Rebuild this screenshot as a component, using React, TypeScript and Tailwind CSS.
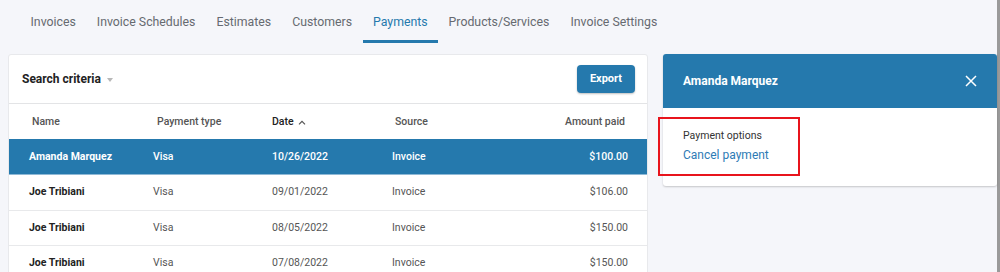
import React from "react";

const rows = [
  { name: "Amanda Marquez", type: "Visa", date: "10/26/2022", source: "Invoice", amount: "$100.00", selected: true },
  { name: "Joe Tribiani", type: "Visa", date: "09/01/2022", source: "Invoice", amount: "$106.00" },
  { name: "Joe Tribiani", type: "Visa", date: "08/05/2022", source: "Invoice", amount: "$150.00" },
  { name: "Joe Tribiani", type: "Visa", date: "07/08/2022", source: "Invoice", amount: "$150.00" },
];

const tabs = ["Invoices", "Invoice Schedules", "Estimates", "Customers", "Payments", "Products/Services", "Invoice Settings"];

export default function App() {
  return (
    <div
      className="flex h-[272px] w-[1000px] overflow-hidden bg-[#f5f6fa]"
      style={{ fontFamily: "Roboto, 'Noto Sans', sans-serif" }}
    >
      <div className="flex w-[997px] shrink-0 flex-col">
        {/* Tabs */}
        <div className="flex h-[43px] pl-[20px]">
          {tabs.map((t) => {
            const active = t === "Payments";
            return (
              <div
                key={t}
                className={
                  active
                    ? "flex h-[43px] items-center border-b-[3px] border-[#2579ad] px-[10.5px] pt-[5px] text-[12.3px] text-[#2579ad]"
                    : "flex h-[43px] items-center border-b-[3px] border-transparent px-[10.5px] pt-[5px] text-[12.3px] text-[#666a70]"
                }
              >
                {t}
              </div>
            );
          })}
        </div>

        <div className="mt-[11px] flex gap-[15px] pl-[8px]">
          {/* Left card */}
          <div className="h-[240px] w-[640px] shrink-0 rounded-[3px] border border-[#e8e9ec] bg-white">
            <div className="flex h-[49px] items-center justify-between border-b border-[#e3e4e6] pl-[13px] pr-[12px]">
              <div className="flex items-center gap-[6px]">
                <span className="text-[12px] font-bold text-[#222]">Search criteria</span>
                <span className="mt-[1px] h-0 w-0 border-x-[3.5px] border-t-[4px] border-x-transparent border-t-[#b8b8b8]"></span>
              </div>
              <button className="h-[28px] w-[58px] rounded-[4px] bg-[#2579ad] text-[11px] font-bold text-white shadow-[0_1px_2px_rgba(0,0,0,0.25)]">
                Export
              </button>
            </div>
            {/* Header */}
            <div className="flex h-[35px] items-center text-[10.5px] font-medium text-[#555]">
              <div className="w-[148px] pl-[23px]">Name</div>
              <div className="w-[115px]">Payment type</div>
              <div className="flex w-[123px] items-center gap-[4px] text-[#222]">
                Date
                <svg width="8" height="5" viewBox="0 0 8 5" className="mt-[1px]">
                  <path d="M1 4.3 L4 1.3 L7 4.3" fill="none" stroke="#555" strokeWidth="1.2" />
                </svg>
              </div>
              <div className="flex-1">Source</div>
              <div className="pr-[22px]">Amount paid</div>
            </div>
            {rows.map((r, i) => (
              <div
                key={i}
                className={
                  r.selected
                    ? "flex h-[36px] items-center border-b border-[#8fb9d6] bg-[#2579ad] text-[10.5px] font-medium text-white"
                    : "flex h-[35.5px] items-center border-b border-[#e8e9eb] text-[10.5px] text-[#555]"
                }
              >
                <div className={r.selected ? "w-[144px] pl-[20px] font-bold text-white" : "w-[144px] pl-[20px] font-bold text-[#222]"}>
                  {r.name}
                </div>
                <div className="w-[119px]">{r.type}</div>
                <div className="w-[120px]">{r.date}</div>
                <div className="flex-1">{r.source}</div>
                <div className="pr-[19px]">{r.amount}</div>
              </div>
            ))}
          </div>

          {/* Right panel */}
          <div className="relative h-[132px] w-[334px] shrink-0">
            <div className="rounded-[3px] bg-white shadow-[0_1px_2px_rgba(0,0,0,0.2)]">
              <div className="flex h-[54px] items-center justify-between rounded-t-[3px] bg-[#2579ad] pl-[20px] pr-[20px]">
                <span className="text-[12px] font-bold text-white">Amanda Marquez</span>
                <svg width="12" height="12" viewBox="0 0 12 12">
                  <path d="M1 1 L11 11 M11 1 L1 11" stroke="white" strokeWidth="1.5" />
                </svg>
              </div>
              <div className="flex h-[78px] flex-col pl-[20px] pt-[20px]">
                <span className="text-[10.5px] text-[#333]">Payment options</span>
                <span className="mt-[2px] text-[12px] text-[#2e7bb5]">Cancel payment</span>
              </div>
            </div>
            <div className="absolute left-[-5px] top-[63px] h-[59px] w-[142px] border-2 border-[#e8141c]"></div>
          </div>
        </div>
      </div>
      <div className="h-full w-[3px] shrink-0 bg-[#9a9a9a]"></div>
    </div>
  );
}
